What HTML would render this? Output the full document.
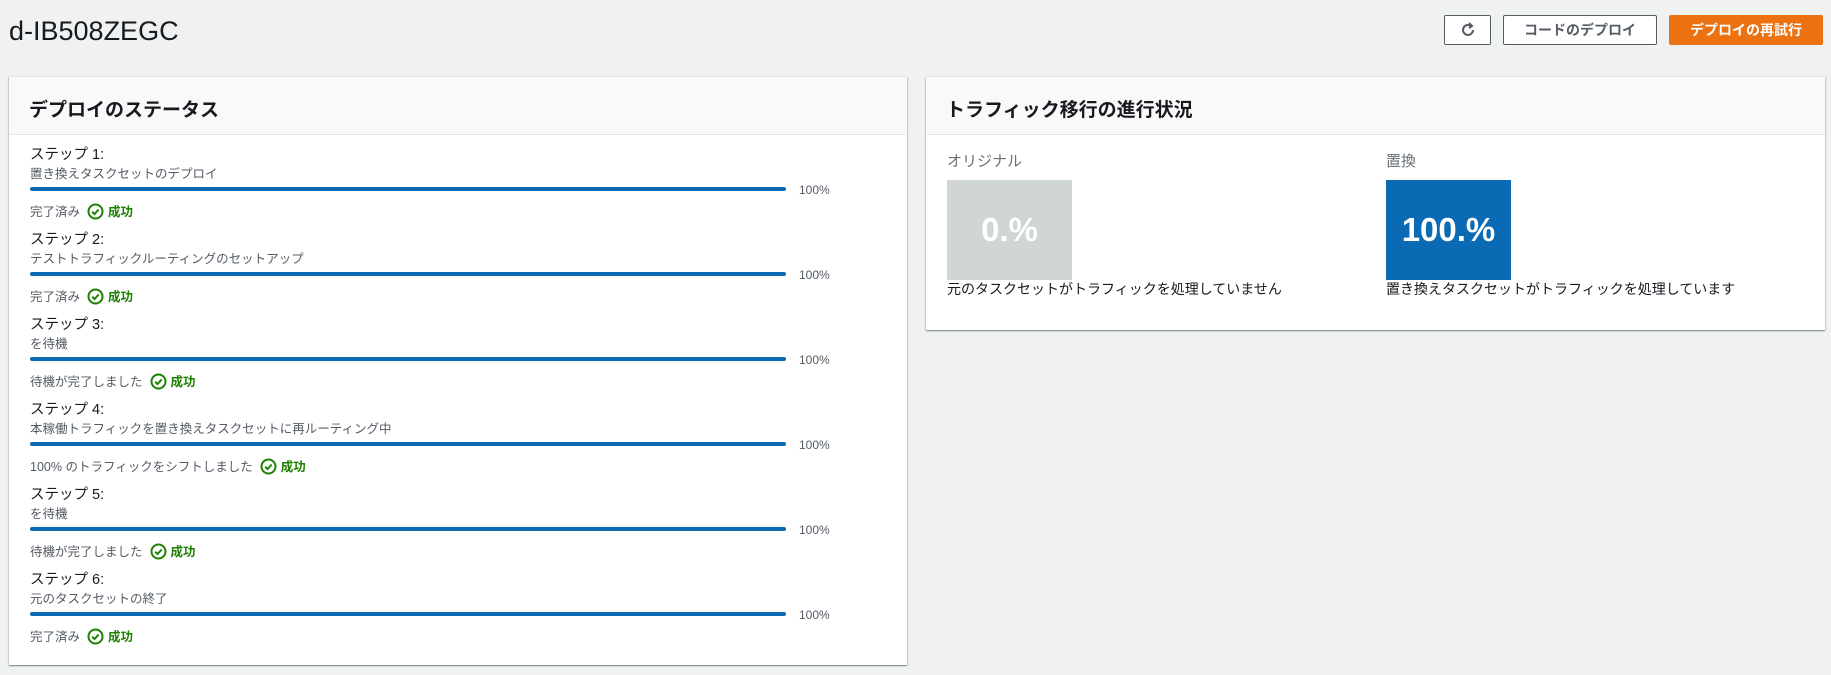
<!DOCTYPE html>
<html><head><meta charset="utf-8"><style>
*{margin:0;padding:0;box-sizing:border-box}
body{width:1831px;height:675px;background:#f0f1f1;font-family:"Liberation Sans","Noto Sans CJK JP",sans-serif;color:#16191f;position:relative;overflow:hidden}
.a{position:absolute;white-space:nowrap}
.panel{position:absolute;background:#fff;box-shadow:0 1px 1px rgba(0,28,36,.3),1px 1px 1px rgba(0,28,36,.15),-1px 1px 1px rgba(0,28,36,.15);border-top:1px solid #e6e6e6}
.hd{position:absolute;left:0;right:0;top:0;height:58px;background:#f9f9f9;border-bottom:1px solid #e4e6e6}
.hd span{position:absolute;left:20px;top:18px;font-size:19px;font-weight:bold}
.btn{position:absolute;top:15px;height:30px;border:1px solid #545b64;background:#fff;font-size:14px;font-weight:bold;color:#545b64;text-align:center;line-height:28px;border-radius:2px}
.lbl{font-size:14.5px;color:#16191f}
.desc{font-size:12.5px;color:#545b64}
.bar{position:absolute;left:30px;width:756px;height:4px;background:#0a6ab3;border-radius:2px}
.pct{font-size:12px;color:#545b64}
.st{font-size:12.5px;color:#545b64}
.ok{color:#1d8102;font-size:12.5px;font-weight:bold}
</style></head><body>
<div class="a" style="left:9px;top:16px;font-size:27px;color:#16191f">d-IB508ZEGC</div>
<div class="btn" style="left:1444px;width:47px"><svg width="18" height="18" viewBox="0 0 18 18" style="margin-top:5px"><path d="M14 9a5 5 0 1 1-2-4" fill="none" stroke="#545b64" stroke-width="2"/><path d="M10 2l3 3-3 2" fill="none" stroke="#545b64" stroke-width="2"/></svg></div>
<div class="btn" style="left:1503px;width:154px">コードのデプロイ</div>
<div class="btn" style="left:1669px;width:154px;background:#ec7211;border-color:#ec7211;color:#fff">デプロイの再試行</div>

<div class="panel" style="left:9px;top:76px;width:898px;height:589px">
<div class="hd"><span>デプロイのステータス</span></div>
</div>
<div id="steps"></div>

<div class="panel" style="left:926px;top:76px;width:899px;height:254px">
<div class="hd"><span>トラフィック移行の進行状況</span></div>
<div class="a" style="left:21px;top:73px;font-size:15px;color:#687078">オリジナル</div>
<div class="a" style="left:21px;top:103px;width:125px;height:100px;background:#d0d6d6;color:#fff;font-weight:bold;font-size:33px;text-align:center;line-height:100px">0.%</div>
<div class="a" style="left:21px;top:202px;font-size:14px">元のタスクセットがトラフィックを処理していません</div>
<div class="a" style="left:460px;top:73px;font-size:15px;color:#687078">置換</div>
<div class="a" style="left:460px;top:103px;width:125px;height:100px;background:#0a6ab3;color:#fff;font-weight:bold;font-size:33px;text-align:center;line-height:100px">100.%</div>
<div class="a" style="left:460px;top:202px;font-size:14px">置き換えタスクセットがトラフィックを処理しています</div>
</div>

<script>
var d=[["ステップ 1:","置き換えタスクセットのデプロイ","完了済み"],["ステップ 2:","テストトラフィックルーティングのセットアップ","完了済み"],["ステップ 3:","を待機","待機が完了しました"],["ステップ 4:","本稼働トラフィックを置き換えタスクセットに再ルーティング中","100% のトラフィックをシフトしました"],["ステップ 5:","を待機","待機が完了しました"],["ステップ 6:","元のタスクセットの終了","完了済み"]];
var h="";
var ic='<svg width="17" height="17" viewBox="0 0 17 17" style="vertical-align:-4px;margin:0 4px 0 7px"><circle cx="8.5" cy="8.5" r="7" fill="none" stroke="#1d8102" stroke-width="2"/><path d="M5.2 8.7l2.3 2.3 4.2-4.5" fill="none" stroke="#1d8102" stroke-width="2"/></svg>';
d.forEach(function(s,k){var o=k*85;
h+='<div class="a lbl" style="left:30px;top:'+(143+o)+'px">'+s[0]+'</div>';
h+='<div class="a desc" style="left:30px;top:'+(163+o)+'px">'+s[1]+'</div>';
h+='<div class="bar" style="top:'+(187+o)+'px"></div>';
h+='<div class="a pct" style="left:799px;top:'+(183+o)+'px">100%</div>';
h+='<div class="a st" style="left:30px;top:'+(201+o)+'px">'+s[2]+ic+'<span class="ok">成功</span></div>';});
document.getElementById("steps").innerHTML=h;
</script>
</body></html>
